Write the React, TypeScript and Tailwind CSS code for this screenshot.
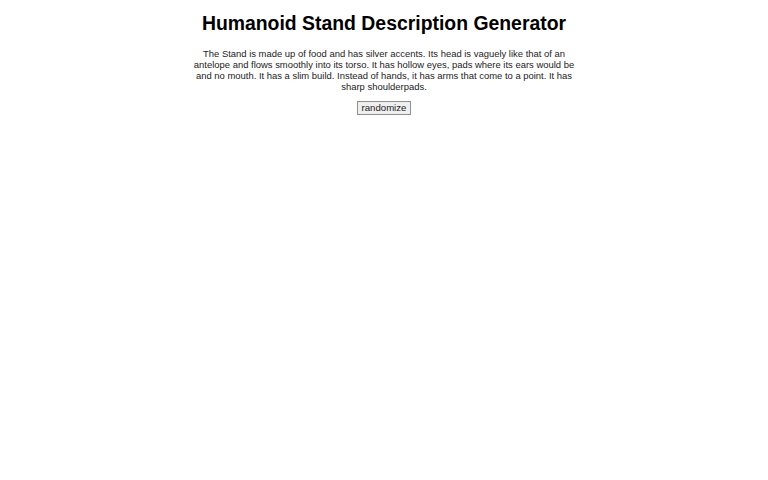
import React, { useState } from 'react';

const heads = ['an antelope', 'a lion', 'a horse', 'an owl', 'a wolf'];

const describe = (head: string) =>
  `The Stand is made up of food and has silver accents. Its head is vaguely like that of ${head} and flows smoothly into its torso. It has hollow eyes, pads where its ears would be and no mouth. It has a slim build. Instead of hands, it has arms that come to a point. It has sharp shoulderpads.`;

export default function App() {
  const [head, setHead] = useState(heads[0]);

  return (
    <div className="flex flex-col items-center bg-white text-black font-['Liberation_Sans',Arial,sans-serif]">
      <h1 className="mt-[11px] text-[19.4px] font-bold leading-[24px]">Humanoid Stand Description Generator</h1>
      <p className="mt-[13px] w-[392px] text-center text-[9.45px] leading-[11px] text-[#222]">{describe(head)}</p>
      <button
        onClick={() => setHead(heads[Math.floor(Math.random() * heads.length)])}
        className="mt-[9px] h-[14px] border border-[#8f8f8f] bg-[#efefef] px-[4px] text-[9.6px] leading-[12px] text-[#222]"
      >
        randomize
      </button>
    </div>
  );
}
